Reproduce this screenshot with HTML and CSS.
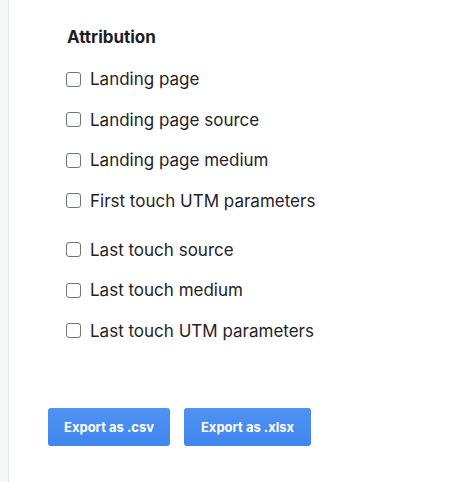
FILE: index.html
```html
<!DOCTYPE html>
<html>
<head>
<meta charset="utf-8">
<link rel="stylesheet" href="styles.css">
</head>
<body>
<div class="page">
  <div class="rail"></div>
  <div class="panel">
    <h3 class="title">Attribution</h3>
    <div class="group">
      <label class="item"><span class="box"></span>Landing page</label>
      <label class="item"><span class="box"></span>Landing page source</label>
      <label class="item"><span class="box"></span>Landing page medium</label>
      <label class="item"><span class="box"></span>First touch UTM parameters</label>
    </div>
    <div class="group second">
      <label class="item"><span class="box"></span>Last touch source</label>
      <label class="item"><span class="box"></span>Last touch medium</label>
      <label class="item"><span class="box"></span>Last touch UTM parameters</label>
    </div>
    <div class="actions">
      <button class="btn">Export as .csv</button>
      <button class="btn">Export as .xlsx</button>
    </div>
  </div>
</div>
</body>
</html>
```
FILE: styles.css
```css
html, body {
  margin: 0;
  padding: 0;
  background: #ffffff;
}
body {
  font-family: Inter, "Noto Sans", sans-serif;
  color: #1f2328;
}
.page {
  display: flex;
  min-height: 482px;
}
.rail {
  width: 8px;
  background: #f6f7f9;
  border-right: 1px solid #e4e6ea;
  flex-shrink: 0;
}
.panel {
  flex: 1;
  padding: 27px 0 0 39px;
}
.title {
  margin: 0 0 0 19px;
  font-size: 17px;
  font-weight: 700;
  line-height: 20px;
  color: #1b1f24;
}
.group {
  display: flex;
  flex-direction: column;
  gap: 20.5px;
  margin: 22px 0 0 18px;
}
.group.second {
  margin-top: 29px;
}
.item {
  display: flex;
  align-items: center;
  gap: 9px;
  font-size: 17px;
  line-height: 20px;
  color: #1f2328;
}
.box {
  box-sizing: border-box;
  width: 15px;
  height: 15px;
  border: 1.5px solid #707379;
  border-radius: 3px;
  background: #fff;
  flex-shrink: 0;
}
.actions {
  display: flex;
  gap: 14px;
  margin-top: 67px;
}
.btn {
  height: 38px;
  padding: 0 16px;
  border: none;
  border-radius: 3px;
  background: linear-gradient(#4f92f2, #3f86ee);
  color: #ffffff;
  font-family: Inter, "Noto Sans", sans-serif;
  font-size: 13px;
  font-weight: 700;
}
.btn + .btn {
  padding: 0 17px;
}
```
